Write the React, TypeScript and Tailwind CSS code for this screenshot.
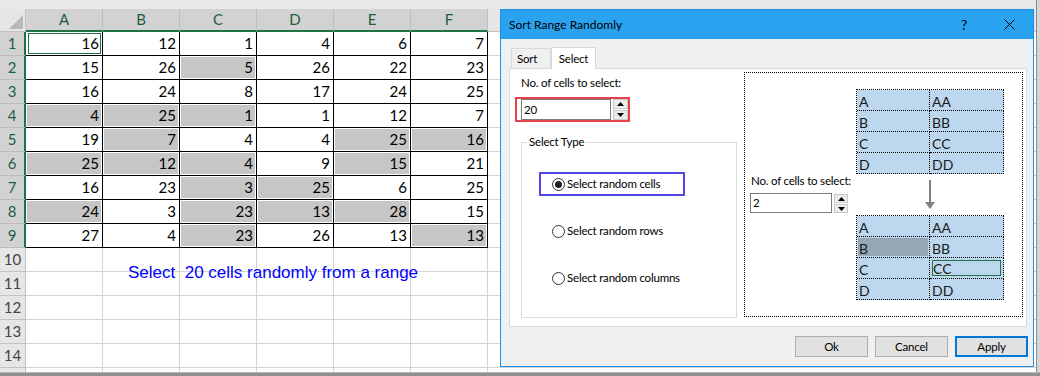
import React from "react";

const data = [
  [16, 12, 1, 4, 6, 7],
  [15, 26, 5, 26, 22, 23],
  [16, 24, 8, 17, 24, 25],
  [4, 25, 1, 1, 12, 7],
  [19, 7, 4, 4, 25, 16],
  [25, 12, 4, 9, 15, 21],
  [16, 23, 3, 25, 6, 25],
  [24, 3, 23, 13, 28, 15],
  [27, 4, 23, 26, 13, 13],
];
const shaded: number[][] = [[], [2], [], [0, 1, 2], [1, 4, 5], [0, 1, 2, 4], [2, 3], [0, 2, 3, 4], [2, 5]];
const cols = ["A", "B", "C", "D", "E", "F"];

function Tri({ up }: { up: boolean }) {
  return (
    <svg width="7" height="4" viewBox="0 0 7 4">
      {up ? <polygon points="0,4 7,4 3.5,0" fill="#000" /> : <polygon points="0,0 7,0 3.5,4" fill="#000" />}
    </svg>
  );
}

function Spinner({ w, h }: { w: string; h: string }) {
  return (
    <div className={`flex flex-col gap-px ${w}`}>
      <div className={`${h} bg-[#ececec] border border-[#c9c9c9] flex items-center justify-center`}>
        <Tri up />
      </div>
      <div className={`${h} bg-[#ececec] border border-[#c9c9c9] flex items-center justify-center`}>
        <Tri up={false} />
      </div>
    </div>
  );
}

function Radio({ checked }: { checked?: boolean }) {
  return (
    <div className="w-[13px] h-[13px] rounded-full border border-[#333] bg-white flex items-center justify-center shrink-0">
      {checked && <div className="w-[7px] h-[7px] rounded-full bg-[#222]" />}
    </div>
  );
}

type CellSpec = { t: string; dark?: boolean; sel?: boolean };

function Tbl({ rows }: { rows: CellSpec[][] }) {
  return (
    <div className="w-[148px] border-t border-l border-dotted border-black">
      {rows.map((r, i) => (
        <div key={i} className="flex h-[21px]">
          {r.map((c, j) => (
            <div
              key={j}
              className={`${j === 0 ? "w-[73px]" : "w-[74px]"} h-[21px] border-r border-b border-dotted border-black bg-[#bdd7ee] flex`}
            >
              {c.dark ? (
                <div className="flex-1 m-px bg-[#96a8b8] flex items-center pl-px pt-[3px] text-[14px] text-[#1a1a1a]">{c.t}</div>
              ) : c.sel ? (
                <div className="flex-1 m-[2px] border border-[#217346] flex items-center pt-[1px] text-[14px] text-[#1a1a1a]">{c.t}</div>
              ) : (
                <div className="flex-1 flex items-center pl-[2px] pt-[3px] text-[14px] text-[#1a1a1a]">{c.t}</div>
              )}
            </div>
          ))}
        </div>
      ))}
    </div>
  );
}

export default function App() {
  const topRows: CellSpec[][] = [
    [{ t: "A" }, { t: "AA" }],
    [{ t: "B" }, { t: "BB" }],
    [{ t: "C" }, { t: "CC" }],
    [{ t: "D" }, { t: "DD" }],
  ];
  const botRows: CellSpec[][] = [
    [{ t: "A" }, { t: "AA" }],
    [{ t: "B", dark: true }, { t: "BB" }],
    [{ t: "C" }, { t: "CC", sel: true }],
    [{ t: "D" }, { t: "DD" }],
  ];

  return (
    <div className="relative w-[1040px] h-[376px] overflow-hidden bg-white font-['Lato',sans-serif]">
      <div className="flex flex-col h-[376px]">
        <div className="flex h-[372px] shrink-0">
          <div className="flex flex-col w-[1036px] overflow-hidden">
            <div className="h-[9px] bg-[#e9e9e9] shrink-0" />
            {/* header row */}
            <div className="flex h-[23px] shrink-0">
              <div className="w-[26px] bg-[#e6e6e6] border-r border-b border-[#c2c2c2] flex items-end justify-end pr-[2px] pb-[2px]">
                <svg width="15" height="14" viewBox="0 0 15 14">
                  <polygon points="15,0 15,14 1,14" fill="#b8b8b8" />
                </svg>
              </div>
              {cols.map((c) => (
                <div
                  key={c}
                  className="w-[77px] bg-[#d2d2d2] border-r border-r-[#bcbcbc] border-b-2 border-b-[#217346] flex items-center justify-center text-[15px] text-[#1e5e3e]"
                >
                  {c}
                </div>
              ))}
              <div className="flex-1 bg-[#e6e6e6] border-b border-[#c2c2c2]" />
            </div>
            {/* data rows */}
            {data.map((row, i) => (
              <div key={i} className="flex h-[24px] shrink-0">
                <div className="w-[26px] bg-[#d2d2d2] border-r-2 border-r-[#217346] border-b border-b-[#bcbcbc] flex items-center justify-center text-[15px] text-[#1e5e3e]">
                  {i + 1}
                </div>
                {row.map((v, j) => {
                  const sh = shaded[i].includes(j);
                  const sel = i === 0 && j === 0;
                  return (
                    <div key={j} className="w-[77px] border-r border-b border-black p-px">
                      <div
                        className={`h-full flex items-center justify-end pr-[2px] text-[15px] text-black ${
                          sh ? "bg-[#c6c6c6]" : ""
                        } ${sel ? "border border-[#217346] ml-px pr-px" : ""}`}
                      >
                        {v}
                      </div>
                    </div>
                  );
                })}
                <div className="flex-1 border-b border-[#d4d4d4]" />
              </div>
            ))}
            {[10, 11, 12, 13, 14, 0].map((n) => (
              <div key={n} className="flex h-[24px] shrink-0">
                <div className="w-[26px] bg-[#e6e6e6] border-r border-b border-[#c2c2c2] flex items-center justify-center text-[15px] text-[#444]">
                  {n > 0 ? n : ""}
                </div>
                {cols.map((c) => (
                  <div key={c} className="w-[77px] border-r border-b border-[#d4d4d4]" />
                ))}
                <div className="flex-1 border-b border-[#d4d4d4]" />
              </div>
            ))}
          </div>
          <div className="w-[4px] border-l border-[#8c8c8c] bg-[#d6d6d6]" />
        </div>
        <div className="h-[4px] bg-[#909090] border-t border-[#b4b4b4]" />
      </div>

      {/* overflow text in sheet */}
      <div className="absolute left-[128px] top-[263px] text-[17px] leading-[20px] text-[#0000ff] font-['Liberation_Sans',sans-serif] whitespace-pre">
        Select  20 cells randomly from a range
      </div>

      {/* dialog */}
      <div className="absolute left-[500px] top-[9px] w-[534px] h-[358px] border border-[#1b8fe6] bg-[#f0f0f0] flex flex-col font-['Lato',sans-serif] text-[11.5px] tracking-[-0.2px] text-black">
        <div className="h-[29px] bg-[#29a3f0] flex items-center pl-[8px] shrink-0">
          <span className="flex-1 text-[12px] tracking-normal">Sort Range Randomly</span>
          <span className="text-[14px] mr-[37px]">?</span>
          <svg width="11" height="11" viewBox="0 0 11 11" className="mr-[18px]">
            <line x1="0.5" y1="0.5" x2="10.5" y2="10.5" stroke="#000" strokeWidth="1" />
            <line x1="10.5" y1="0.5" x2="0.5" y2="10.5" stroke="#000" strokeWidth="1" />
          </svg>
        </div>
        <div className="flex flex-col pl-[8px] pt-[8px]">
          {/* tabs */}
          <div className="flex items-end pl-[2px] h-[21px]">
            <div className="h-[20px] w-[40px] border border-b-0 border-[#d9d9d9] bg-[#f0f0f0] flex items-center pl-[5px]">
              Sort
            </div>
            <div className="h-[22px] w-[45px] border border-b-0 border-[#d9d9d9] bg-white flex items-center justify-center -mb-px relative z-10">
              Select
            </div>
          </div>
          {/* panel */}
          <div className="w-[518px] h-[259px] border border-[#d9d9d9] bg-white flex pl-[11px]">
            <div className="w-[216px] flex flex-col">
              <div className="mt-[6px] leading-[16px] whitespace-nowrap">No. of cells to select:</div>
              <div className="mt-[6px] -ml-[6px] w-[115px] h-[25px] border-2 border-[#e8414a] flex pl-[4px]">
                <div className="w-[90px] h-[21px] border border-[#7a7a7a] bg-white flex items-center pl-[2px]">20</div>
                <div className="ml-[2px]">
                  <Spinner w="w-[15px]" h="h-[10px]" />
                </div>
              </div>
              <fieldset className="mt-[12px] w-[216px] h-[184px] border border-[#dcdcdc]">
                <legend className="ml-[5px] px-[2px] leading-[16px]">Select Type</legend>
                <div className="mt-[22px] ml-[17px] w-[146px] h-[24px] border-2 border-[#5046e6] flex items-center pl-[11px] gap-[2px] whitespace-nowrap">
                  <Radio checked />
                  <span>Select random cells</span>
                </div>
                <div className="mt-[27px] ml-[30px] h-[16px] flex items-center gap-[2px] whitespace-nowrap">
                  <Radio />
                  <span>Select random rows</span>
                </div>
                <div className="mt-[31px] ml-[30px] h-[16px] flex items-center gap-[2px] whitespace-nowrap">
                  <Radio />
                  <span>Select random columns</span>
                </div>
              </fieldset>
            </div>
            <div className="ml-[7px] mt-[3px] w-[279px] h-[245px] border border-dotted border-black flex">
              <div className="w-[111px] flex flex-col pl-[5px] pt-[100px]">
                <div className="pl-px leading-[16px] whitespace-nowrap">No. of cells to select:</div>
                <div className="mt-[4px] flex">
                  <div className="w-[82px] h-[20px] border border-[#7a7a7a] bg-white flex items-center pl-[2px]">2</div>
                  <div className="ml-[2px] mt-px">
                    <Spinner w="w-[14px]" h="h-[9px]" />
                  </div>
                </div>
              </div>
              <div className="w-[148px] flex flex-col pt-[16px] tracking-normal">
                <Tbl rows={topRows} />
                <div className="h-[41px] flex justify-center">
                  <svg width="12" height="41" viewBox="0 0 12 41">
                    <line x1="6" y1="6" x2="6" y2="29" stroke="#7f7f7f" strokeWidth="2" />
                    <polygon points="1,28 11,28 6,35" fill="#7f7f7f" />
                  </svg>
                </div>
                <Tbl rows={botRows} />
              </div>
            </div>
          </div>
          {/* buttons */}
          <div className="mt-[9px] flex justify-end pr-[5px] gap-[7px]">
            <div className="w-[73px] h-[21px] bg-[#e1e1e1] border border-[#adadad] flex items-center justify-center">Ok</div>
            <div className="w-[73px] h-[21px] bg-[#e1e1e1] border border-[#adadad] flex items-center justify-center">Cancel</div>
            <div className="w-[73px] h-[21px] bg-[#e1e1e1] border-2 border-[#0078d7] flex items-center justify-center">Apply</div>
          </div>
        </div>
      </div>
    </div>
  );
}
